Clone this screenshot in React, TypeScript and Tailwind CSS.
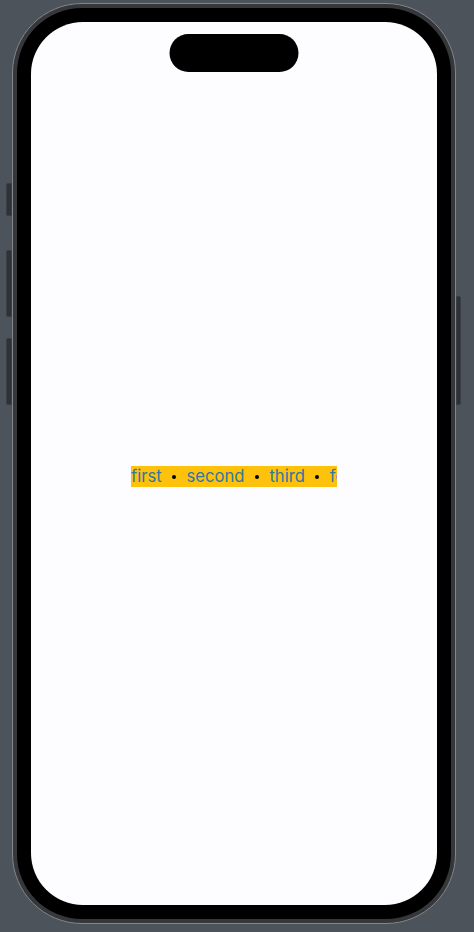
import React from "react";

const words = ["first", "second", "third", "fourth", "fifth"];

function Ticker() {
  return (
    <div className="w-[206px] h-[21px] overflow-hidden bg-[#fec20c]">
      <div className="flex items-center h-full whitespace-nowrap gap-[10.5px] text-[16.6px] leading-[21px] text-[#3276a4] [font-family:Inter,'Noto_Sans',sans-serif]">
        {words.map((w, i) => (
          <React.Fragment key={w}>
            {i > 0 && <span className="block w-[4px] h-[4px] rounded-full bg-black shrink-0" />}
            <span className="shrink-0">{w}</span>
          </React.Fragment>
        ))}
      </div>
    </div>
  );
}

const btn = "bg-[#2e3137] border border-[#3b3e44]";

export default function App() {
  return (
    <div className="w-[474px] h-[932px] bg-[#4d535b] pt-[3px] pl-[6px] overflow-hidden flex items-start">
      {/* silent switch and volume keys */}
      <div className="w-[6px] flex flex-col pt-[180px]">
        <div className={`h-[33px] rounded-l-[2px] ${btn}`} />
        <div className={`h-[67px] mt-[34px] rounded-l-[2px] ${btn}`} />
        <div className={`h-[67px] mt-[21px] rounded-l-[2px] ${btn}`} />
      </div>

      {/* device body */}
      <div className="w-[444px] h-[921px] rounded-[70px] border border-[#83868b] bg-[#36373a] p-[4px]">
        <div className="w-full h-full rounded-[65px] bg-black p-[14px]">
          <div className="relative w-full h-full rounded-[52px] bg-[#fdfcff] overflow-hidden flex items-center justify-center pt-[26px]">
            <div className="absolute left-1/2 -translate-x-1/2 top-[12px] w-[129px] h-[38px] rounded-full bg-black" />
            <Ticker />
          </div>
        </div>
      </div>

      {/* side key */}
      <div className="w-[5px] flex flex-col pt-[293px]">
        <div className={`h-[109px] rounded-r-[2px] ${btn}`} />
      </div>
    </div>
  );
}
